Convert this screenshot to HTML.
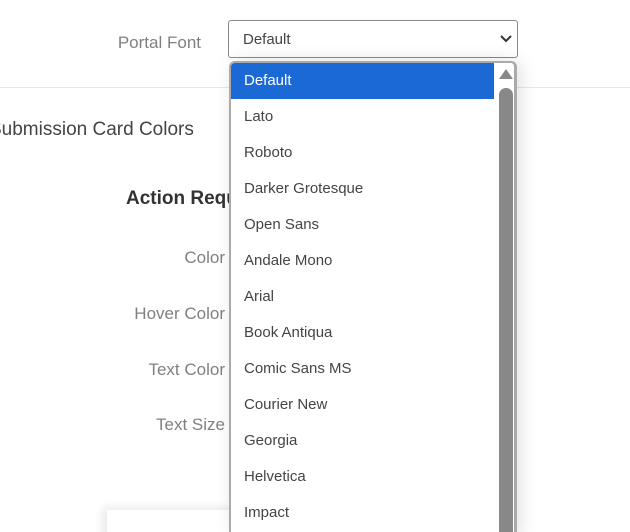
<!DOCTYPE html>
<html><head><style>
html,body{margin:0;width:630px;height:532px;overflow:hidden}
body{background:#fff;font-family:"Liberation Sans",sans-serif;position:relative}
.l{position:absolute;color:#808080;font-size:17px;font-family:"Liberation Sans",sans-serif;text-align:right;width:200px}
.sel{position:absolute;left:228px;top:20px;width:290px;height:38px;border:1px solid #8a8a8a;border-radius:3px;box-sizing:border-box;font-size:15px;color:#444;padding:10px 0 0 14px}
.dd{position:absolute;left:229px;top:61px;width:288px;height:475px;border:2px solid #aaa;border-right-width:3px;border-bottom:none;border-radius:6px 6px 0 0;box-sizing:border-box;background:#fff;box-shadow:4px 0 18px rgba(0,0,0,.12);overflow:hidden}
.it{height:36px;line-height:36px;padding-left:13px;font-size:15px;color:#444;width:250px}
.it.a{background:#1b69d4;color:#fff}
</style></head><body>
<div style="position:absolute;left:0;top:87px;width:630px;height:1px;background:#e8e8e8"></div>
<div class="l" style="left:1px;top:33px">Portal Font</div>
<div class="l" style="left:-11px;top:119px;font-size:19px;color:#444;text-align:left;width:300px">Submission Card Colors</div>
<div class="l" style="left:126px;top:188px;font-size:19px;color:#333;font-weight:bold;text-align:left">Action Required</div>
<div class="l" style="left:25px;top:248px">Color</div>
<div class="l" style="left:25px;top:304px">Hover Color</div>
<div class="l" style="left:25px;top:360px">Text Color</div>
<div class="l" style="left:25px;top:415px">Text Size</div>
<div style="position:absolute;left:107px;top:510px;width:140px;height:30px;background:#fff;box-shadow:-4px -2px 10px rgba(0,0,0,.1)"></div>
<div class="sel">Default
<svg style="position:absolute;right:5px;top:14px" width="12" height="8" viewBox="0 0 12 8"><path d="M1 1l5 5 5-5" fill="none" stroke="#333" stroke-width="2"/></svg></div>
<div class="dd">
<div class="it a">Default</div><div class="it">Lato</div><div class="it">Roboto</div><div class="it">Darker Grotesque</div><div class="it">Open Sans</div><div class="it">Andale Mono</div><div class="it">Arial</div><div class="it">Book Antiqua</div><div class="it">Comic Sans MS</div><div class="it">Courier New</div><div class="it">Georgia</div><div class="it">Helvetica</div><div class="it">Impact</div>
<svg style="position:absolute;left:267px;top:5px" width="16" height="12"><path d="M8 1L15 11H1Z" fill="#888"/></svg>
<div style="position:absolute;left:268px;top:25px;width:14px;height:460px;background:#888;border-radius:7px"></div>
</div>
</body></html>
